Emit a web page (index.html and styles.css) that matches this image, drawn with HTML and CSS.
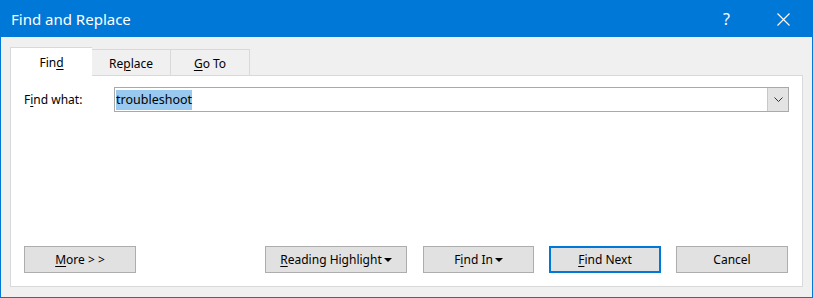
FILE: index.html
```html
<!DOCTYPE html>
<html>
  <head>
    <title>Find and Replace</title>
    <link rel="stylesheet" href="styles.css">
  </head>
  <body>
    <div class="window">
      <div class="titlebar">
        <span class="title">Find and Replace</span>
        <span class="help">?</span>
        <svg class="close" width="13" height="13" viewBox="0 0 13 13">
          <path d="M0.5 0.5 L12.5 12.5 M12.5 0.5 L0.5 12.5" stroke="#fff" stroke-width="1.1" fill="none" />
        </svg>
      </div>

      <div class="content">
        <div class="tabs">
          <div class="tab active">Fin<u>d</u></div>
          <div class="tab">Re<u>p</u>lace</div>
          <div class="tab"><u>G</u>o To</div>
        </div>

        <div class="panel">
          <div class="row">
            <label class="label">F<u>i</u>nd what:</label>
            <div class="combo">
              <span class="value"><span class="selected">troubleshoot</span></span>
              <span class="drop">
                <svg width="9" height="5" viewBox="0 0 9 5">
                  <path d="M0.5 0.5 L4.5 4.5 L8.5 0.5" stroke="#333" stroke-width="1" fill="none" />
                </svg>
              </span>
            </div>
          </div>

          <div class="buttons">
            <button class="btn"><u>M</u>ore &gt; &gt;</button>
            <button class="btn wide push"><u>R</u>eading Highlight <span class="caret"></span></button>
            <button class="btn narrow">F<u>i</u>nd In<span class="caret"></span></button>
            <button class="btn default"><u>F</u>ind Next</button>
            <button class="btn">Cancel</button>
          </div>
        </div>
      </div>
    </div>
  </body>
</html>
```

FILE: styles.css
```css
* {
  box-sizing: border-box;
}

body {
  margin: 0;
  font-family: "Noto Sans", "Open Sans", sans-serif;
  font-size: 12px;
  color: #000;
  background: #fff;
}

u {
  text-decoration-thickness: 1px;
  text-underline-offset: 2px;
}

.window {
  width: 813px;
  height: 298px;
  border: 1px solid #0078d7;
  background: #f0f0f0;
  display: flex;
  flex-direction: column;
}

.titlebar {
  height: 36px;
  background: #0078d7;
  color: #fff;
  display: flex;
  align-items: center;
  padding: 0 22px 0 10px;
}

.title {
  font-size: 15px;
  flex: 1;
}

.help {
  font-size: 16px;
  margin-right: 47px;
  margin-top: -1px;
}

.close {
  display: block;
}

.content {
  flex: 1;
  display: flex;
  flex-direction: column;
  padding: 10px 9px 10px 9px;
}

.tabs {
  display: flex;
  align-items: flex-end;
  height: 28px;
  position: relative;
  z-index: 1;
}

.tab {
  width: 79px;
  height: 26px;
  border: 1px solid #d9d9d9;
  border-bottom: none;
  border-left: none;
  background: #f0f0f0;
  display: flex;
  align-items: center;
  justify-content: center;
  padding-top: 1px;
}

.tab.active {
  width: 82px;
  height: 29px;
  background: #fff;
  border-left: 1px solid #d9d9d9;
  border-right: none;
  margin-bottom: -1px;
}

.panel {
  flex: 1;
  background: #fff;
  border: 1px solid #d9d9d9;
  display: flex;
  flex-direction: column;
  padding: 11px 14px 13px 13px;
}

.row {
  display: flex;
  align-items: center;
  margin-right: -1px;
}

.label {
  width: 90px;
}

.combo {
  flex: 1;
  height: 25px;
  border: 1px solid #a9a9a9;
  display: flex;
  background: #fff;
}

.value {
  flex: 1;
  display: flex;
  align-items: center;
  padding-left: 1px;
}

.selected {
  background: #99c9ef;
  padding: 2px 0 3px;
  line-height: 15px;
  font-size: 12.5px;
}

.drop {
  width: 21px;
  background: #e3e3e3;
  border-left: 1px solid #c8c8c8;
  display: flex;
  align-items: center;
  justify-content: center;
}

.buttons {
  margin-top: auto;
  display: flex;
  gap: 15px;
}

.btn {
  width: 112px;
  height: 27px;
  font-family: inherit;
  font-size: 12px;
  color: #000;
  background: #e1e1e1;
  border: 1px solid #adadad;
  padding: 0;
  display: flex;
  align-items: center;
  justify-content: center;
}

.btn.wide {
  width: 142px;
}

.btn.narrow {
  width: 111px;
}

.push {
  margin-left: auto;
  margin-right: 1px;
}

.btn.default {
  border: 2px solid #0078d7;
}

.caret {
  width: 0;
  height: 0;
  border-left: 4px solid transparent;
  border-right: 4px solid transparent;
  border-top: 4px solid #000;
  margin-left: 2px;
}
```
